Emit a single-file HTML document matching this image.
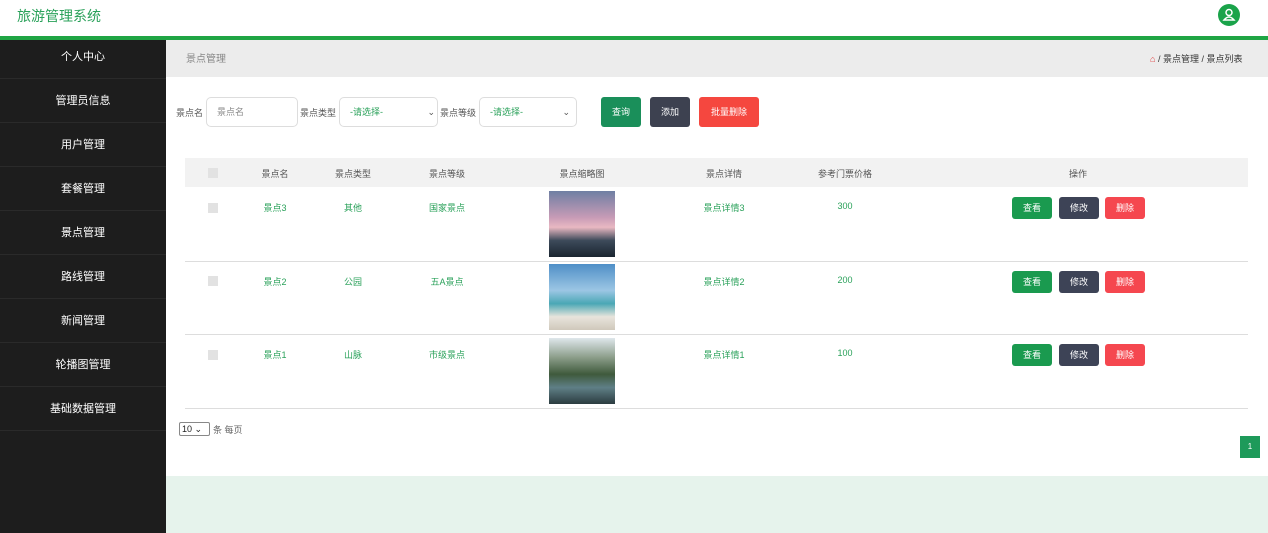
<!DOCTYPE html>
<html><head><meta charset="utf-8"><style>
*{margin:0;padding:0;box-sizing:border-box}
body{width:1268px;height:533px;overflow:hidden;font-family:"Liberation Sans","Noto Sans CJK SC",sans-serif;background:#fff;position:relative;font-size:10px;color:#555}
.abs{position:absolute}
.hdr{left:0;top:0;width:1268px;height:36px;background:#fff}
.logo{left:17px;top:6px;font-size:14px;color:#2aa15a}
.av{left:1218px;top:4px;width:22px;height:22px;border-radius:50%;background:#1aa34a}
.gl{left:0;top:36px;width:1268px;height:4px;background:#1fa544}
.side{left:0;top:40px;width:166px;height:493px;background:#1d1d1d;overflow:hidden}
.mi{position:absolute;left:0;width:166px;height:44px;line-height:44px;text-align:center;color:#fff;font-size:11px;border-bottom:1px solid #2a2a2a}
.bc{left:166px;top:40px;width:1102px;height:37px;background:#ececec}
.foot{left:166px;top:476px;width:1102px;height:57px;background:#e6f3ec}
.lbl{font-size:9px;color:#555}
.inp{border:1px solid #ddd;border-radius:5px;background:#fff;font-size:9px;padding-left:10px;line-height:28px}
.sel{color:#2aa15a}
.btn{color:#fff;font-size:9px;text-align:center;border-radius:3px;line-height:30px}
.th{top:158px;left:185px;width:1063px;height:29px;background:#f2f2f2}
.t{position:absolute;font-size:9px;transform:translateX(-50%);white-space:nowrap}
.g{color:#2aa15a}
.cb{position:absolute;width:10px;height:10px;background:#e2e2e2;left:208px}
.row{left:185px;width:1063px;border-bottom:1px solid #ddd}
.b2{position:absolute;height:22px;line-height:22px;color:#fff;font-size:9px;text-align:center;border-radius:3px;width:40px}
</style></head><body>
<div class="abs hdr"></div>
<div class="abs logo">旅游管理系统</div>
<div class="abs av"><svg width="22" height="22" viewBox="0 0 22 22"><circle cx="11" cy="8.5" r="3" fill="none" stroke="#fff" stroke-width="1.5"/><path d="M6 16 Q11 10 16 16 Z" fill="none" stroke="#fff" stroke-width="1.5"/></svg></div>
<div class="abs gl"></div>
<div class="abs side">
<div class="mi" style="top:-5px">个人中心</div>
<div class="mi" style="top:39px">管理员信息</div>
<div class="mi" style="top:83px">用户管理</div>
<div class="mi" style="top:127px">套餐管理</div>
<div class="mi" style="top:171px">景点管理</div>
<div class="mi" style="top:215px">路线管理</div>
<div class="mi" style="top:259px">新闻管理</div>
<div class="mi" style="top:303px">轮播图管理</div>
<div class="mi" style="top:347px">基础数据管理</div>
</div>
<div class="abs bc"></div>
<div class="abs" style="left:186px;top:50px;font-size:10px;color:#888">景点管理</div>
<div class="abs" style="left:1150px;top:52px;font-size:9px;color:#333"><span style="color:#e04040">⌂</span> / 景点管理 / 景点列表</div>

<div class="abs lbl" style="left:176px;top:106px">景点名</div>
<div class="abs inp" style="left:206px;top:97px;width:92px;height:30px;color:#888">景点名</div>
<div class="abs lbl" style="left:300px;top:106px">景点类型</div>
<div class="abs inp sel" style="left:339px;top:97px;width:99px;height:30px">-请选择-<span style="position:absolute;right:2px;color:#555">⌄</span></div>
<div class="abs lbl" style="left:440px;top:106px">景点等级</div>
<div class="abs inp sel" style="left:479px;top:97px;width:98px;height:30px">-请选择-<span style="position:absolute;right:6px;color:#555">⌄</span></div>
<div class="abs btn" style="left:601px;top:97px;width:40px;height:30px;background:#1a8f5a">查询</div>
<div class="abs btn" style="left:650px;top:97px;width:40px;height:30px;background:#3d4150">添加</div>
<div class="abs btn" style="left:699px;top:97px;width:60px;height:30px;background:#f5473f">批量删除</div>

<div class="abs th"></div>
<div class="cb" style="top:168px"></div>
<div class="t" style="left:275px;top:167px">景点名</div>
<div class="t" style="left:353px;top:167px">景点类型</div>
<div class="t" style="left:447px;top:167px">景点等级</div>
<div class="t" style="left:582px;top:167px">景点缩略图</div>
<div class="t" style="left:724px;top:167px">景点详情</div>
<div class="t" style="left:845px;top:167px">参考门票价格</div>
<div class="t" style="left:1078px;top:167px">操作</div>

<div class="abs row" style="top:187px;height:75px"></div>
<div class="abs row" style="top:262px;height:73px"></div>
<div class="abs row" style="top:335px;height:74px"></div>

<div class="cb" style="top:203px"></div>
<div class="t g" style="left:275px;top:201px">景点3</div>
<div class="t g" style="left:353px;top:201px">其他</div>
<div class="t g" style="left:447px;top:201px">国家景点</div>
<div class="abs" style="left:549px;top:191px;width:66px;height:66px;background:linear-gradient(180deg,#6f7fa3 0%,#c79bb6 40%,#e9b8c2 55%,#3d4a5a 75%,#1a2530 100%)"></div>
<div class="t g" style="left:724px;top:201px">景点详情3</div>
<div class="t g" style="left:845px;top:201px">300</div>

<div class="cb" style="top:276px"></div>
<div class="t g" style="left:275px;top:275px">景点2</div>
<div class="t g" style="left:353px;top:275px">公园</div>
<div class="t g" style="left:447px;top:275px">五A景点</div>
<div class="abs" style="left:549px;top:264px;width:66px;height:66px;background:linear-gradient(180deg,#4f8fc7 0%,#9cc6e4 40%,#4aa7b5 60%,#e8e4dc 80%,#cfc8bb 100%)"></div>
<div class="t g" style="left:724px;top:275px">景点详情2</div>
<div class="t g" style="left:845px;top:275px">200</div>

<div class="cb" style="top:350px"></div>
<div class="t g" style="left:275px;top:348px">景点1</div>
<div class="t g" style="left:353px;top:348px">山脉</div>
<div class="t g" style="left:447px;top:348px">市级景点</div>
<div class="abs" style="left:549px;top:338px;width:66px;height:66px;background:linear-gradient(180deg,#dfe7ec 0%,#8a9c88 30%,#3f5a3c 55%,#5f7f86 75%,#2b3c40 100%)"></div>
<div class="t g" style="left:724px;top:348px">景点详情1</div>
<div class="t g" style="left:845px;top:348px">100</div>

<div class="b2" style="left:1012px;top:197px;background:#1a9a4f">查看</div>
<div class="b2" style="left:1059px;top:197px;background:#3d4356">修改</div>
<div class="b2" style="left:1105px;top:197px;background:#f5474f">删除</div>
<div class="b2" style="left:1012px;top:271px;background:#1a9a4f">查看</div>
<div class="b2" style="left:1059px;top:271px;background:#3d4356">修改</div>
<div class="b2" style="left:1105px;top:271px;background:#f5474f">删除</div>
<div class="b2" style="left:1012px;top:344px;background:#1a9a4f">查看</div>
<div class="b2" style="left:1059px;top:344px;background:#3d4356">修改</div>
<div class="b2" style="left:1105px;top:344px;background:#f5474f">删除</div>

<div class="abs" style="left:179px;top:422px;width:31px;height:14px;border:1px solid #888;border-radius:2px;font-size:9px;color:#222;line-height:12px;padding-left:2px">10 ⌄</div>
<div class="abs" style="left:213px;top:423px;font-size:9px;color:#666">条 每页</div>
<div class="abs" style="left:1240px;top:436px;width:20px;height:22px;background:#1e9a5a;color:#fff;font-size:8px;text-align:center;line-height:22px">1</div>
<div class="abs foot"></div>
</body></html>
